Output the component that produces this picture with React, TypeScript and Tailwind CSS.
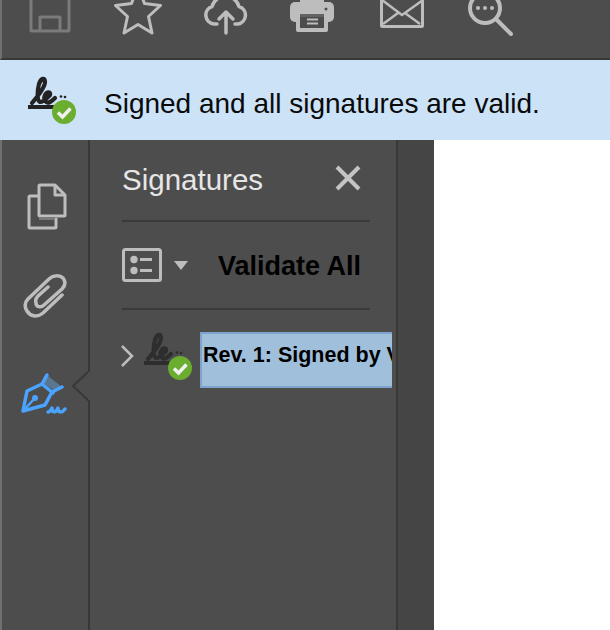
import React from 'react';

const SANS = "font-['Liberation_Sans',Arial,sans-serif]";

const Toolbar = () => (
  <div className="flex h-[60px] shrink-0 gap-10 overflow-hidden border-b-2 border-l-2 border-b-[#383838] border-l-[#707070] bg-[#4d4d4d] pl-6">
    {/* icons sit partly above the top of the window */}
    <svg width="48" height="48" viewBox="0 0 48 48" fill="none" className="-mt-3 shrink-0" stroke="#7b7b7b" strokeWidth="3" strokeLinejoin="round">
      <path d="M6 -2H36L43 5V42A1 1 0 0 1 42 43H6A1 1 0 0 1 5 42V-1Z" />
      <path d="M14 43V29H34V43M14 -2V10H34V-2M25 -2V6H30V-2" />
    </svg>
    <svg width="48" height="48" viewBox="0 0 48 48" fill="none" className="-mt-3 shrink-0" stroke="#bdbdbd" strokeWidth="3" strokeLinejoin="round">
      <path d="M24 -2L30.500 15.500L46.500 17.500L34.500 28.500L38 45L24 36.500L10 45L13.500 28.500L1.500 17.500L17.500 15.500Z" />
    </svg>
    <svg width="48" height="48" viewBox="0 0 48 48" fill="none" className="-mt-3 shrink-0" stroke="#bdbdbd" strokeWidth="3.500" strokeLinecap="round" strokeLinejoin="round">
      <path d="M15 36H12A9 9 0 0 1 10 18.500A14 14 0 0 1 37 18.500A9 9 0 0 1 36 36H33" />
      <path d="M24 45V24M17 31L24 24L31 31" />
    </svg>
    <svg width="48" height="48" viewBox="0 0 48 48" className="-mt-3 shrink-0">
      <rect x="10" y="8" width="24" height="8" fill="#bdbdbd" />
      <rect x="0" y="14" width="44" height="20" rx="5" fill="#bdbdbd" />
      <rect x="6" y="26" width="32" height="18" rx="2" fill="#bdbdbd" />
      <rect x="10" y="26" width="24" height="14" fill="#4d4d4d" />
      <rect x="10" y="26" width="24" height="3" fill="#636363" />
      <path d="M17 31.500H28M17 35.500H28" stroke="#bdbdbd" strokeWidth="2" />
      <circle cx="36" cy="21" r="1.500" fill="#4d4d4d" />
    </svg>
    <svg width="48" height="48" viewBox="0 0 48 48" fill="none" className="-mt-3 shrink-0" stroke="#bdbdbd" strokeWidth="3" strokeLinejoin="round">
      <rect x="3.500" y="-2" width="41" height="40.500" rx="1" />
      <path d="M4 12L24 27L45 12M5 36L20 25M42 36L27 25" strokeWidth="2.500" />
    </svg>
    <svg width="48" height="48" viewBox="0 0 48 48" fill="none" className="-mt-3 shrink-0" stroke="#bdbdbd" strokeWidth="4" strokeLinecap="round">
      <circle cx="19" cy="20" r="15" />
      <path d="M30 31L45 46" />
      <circle cx="12" cy="20" r="2" fill="#bdbdbd" stroke="none" />
      <circle cx="19" cy="20" r="2" fill="#bdbdbd" stroke="none" />
      <circle cx="26" cy="20" r="2" fill="#bdbdbd" stroke="none" />
    </svg>
  </div>
);

const SignatureIcon = ({ color }: { color: string }) => (
  <svg width="48" height="48" viewBox="0 0 48 48" fill="none" className="shrink-0">
    <path
      d="M4 27C10 20 17 11 17 6C17 1 13 2 11 8C9 15 9 25 12 26C16 26 20 21 22 19C23 16 19 15 17 19C15 24 18 28 22 26C24 25 26 23 27 22"
      stroke={color}
      strokeWidth="4.200"
      strokeLinecap="round"
    />
    <circle cx="33" cy="20.500" r="1.300" fill={color} />
    <circle cx="37" cy="21" r="1.300" fill={color} />
    <rect x="0" y="29" width="27" height="4" fill={color} />
    <circle cx="36" cy="36" r="12" fill="#6aad2f" />
    <path d="M30 36.500L34.500 41L42.500 32.500" stroke="#f0f0f0" strokeWidth="3.500" />
  </svg>
);

const Banner = () => (
  <div className="flex h-20 shrink-0 items-center bg-[#cce2f6] pl-7">
    <SignatureIcon color="#222222" />
    <span className={`${SANS} mt-2 ml-7 text-[28px] leading-none text-[#0a0a0a]`}>Signed and all signatures are valid.</span>
  </div>
);

const Rail = () => (
  <div className="relative flex w-[90px] shrink-0 flex-col border-r-2 border-l-2 border-r-[#383838] border-l-[#707070] pl-[19px]">
    <svg width="48" height="48" viewBox="0 0 48 48" fill="none" className="mt-[42px]" stroke="#bdbdbd" strokeWidth="3" strokeLinejoin="round">
      <path d="M17 14H9A1 1 0 0 0 8 15V45A1 1 0 0 0 9 46H34A1 1 0 0 0 35 45V36" />
      <path d="M19 3H34L44 13V33A1 1 0 0 1 43 34H19A1 1 0 0 1 18 33V4A1 1 0 0 1 19 3Z" />
      <path d="M34 3V13H44" />
      <rect x="18" y="35" width="15" height="3" fill="#7a7a7a" stroke="none" />
    </svg>
    <svg width="48" height="48" viewBox="0 0 48 48" fill="none" className="mt-[42px]" stroke="#bdbdbd" strokeWidth="3.500" strokeLinecap="round">
      <path d="M41 23L22 41C16 46 9 44 6 39C3 34 4 30 7 27L28 7C32 3 39 3 42 6C45 10 44 14 41 17L23 33C20 36 15 35 15 31C14 28 15 26 17 24L27 15" />
    </svg>
    <svg width="50" height="48" viewBox="0 0 50 48" fill="none" className="mt-[50px] -ml-px" stroke="#4aa3ff" strokeWidth="3.500" strokeLinecap="round" strokeLinejoin="round">
      <path d="M27 5L42 17L35 21L23 13Z" fill="#5a7690" stroke="none" />
      <path d="M27 5L22 14L7 21L3 41L25 35L32 22L42 17" />
      <path d="M22 14L33 23" />
      <path d="M3 41L15 28" strokeWidth="2.500" />
      <circle cx="15" cy="28" r="3" fill="#4aa3ff" stroke="none" />
      <path d="M28 42C30 42 31 40 32 38C32 43 36 43 38 38C38 43 42 43 45 39" strokeWidth="3.500" />
    </svg>
    {/* notch pointing at the active panel */}
    <svg width="18" height="34" viewBox="0 0 18 34" fill="none" className="absolute top-[231px] right-[-2px]">
      <path d="M17 0L1 15L17 30" fill="#4d4d4d" stroke="#383838" strokeWidth="2" />
      <rect x="16" y="1" width="2" height="28" fill="#4d4d4d" />
    </svg>
  </div>
);

const Panel = () => (
  <div className="flex w-[308px] shrink-0 flex-col border-r-2 border-r-[#383838] pr-[26px] pl-8">
    <div className="flex h-[82px] shrink-0 items-center justify-between border-b-2 border-b-[#3a3a3a]">
      <span className={`${SANS} text-[29.500px] leading-none text-[#e6e6e6]`}>Signatures</span>
      <svg width="26" height="26" viewBox="0 0 26 26" fill="none" className="mr-[9px] mb-1" stroke="#c4c4c4" strokeWidth="4">
        <path d="M2 2L24 24M24 2L2 24" />
      </svg>
    </div>
    <div className="flex h-[88px] shrink-0 items-center border-b-2 border-b-[#3a3a3a]">
      <svg width="40" height="34" viewBox="0 0 40 34" fill="none" className="shrink-0">
        <rect x="1.500" y="1.500" width="37" height="31" rx="2" stroke="#bdbdbd" strokeWidth="3" />
        <circle cx="12" cy="11.500" r="3.700" fill="#bdbdbd" />
        <circle cx="12" cy="22.500" r="3.700" fill="#bdbdbd" />
        <path d="M18 11.500H30M18 22.500H30" stroke="#bdbdbd" strokeWidth="3" />
      </svg>
      <svg width="14" height="9" viewBox="0 0 14 9" className="ml-3 shrink-0">
        <path d="M0 0H14L7 9Z" fill="#bdbdbd" />
      </svg>
      <span className={`${SANS} mt-[2px] ml-[30px] text-[27px] leading-none font-bold whitespace-nowrap text-black`}>Validate All</span>
    </div>
    <div className="mt-[22px] flex">
      <svg width="14" height="24" viewBox="0 0 14 24" fill="none" className="mt-3 -ml-[2px] shrink-0" stroke="#bdbdbd" strokeWidth="2.500">
        <path d="M2 2L12 12L2 22" />
      </svg>
      <div className="ml-[10px]">
        <SignatureIcon color="#2e2e2e" />
      </div>
      <div className="ml-2 h-14 w-[192px] shrink-0 overflow-hidden border-2 border-r-0 border-[#7ea3cf] bg-[#a0bfdb] pt-2 pl-[1px]">
        <span className={`${SANS} block text-[21.500px] leading-[26px] font-bold whitespace-nowrap text-black`}>Rev. 1: Signed by V</span>
      </div>
    </div>
  </div>
);

export default function App() {
  return (
    <div className="flex h-[630px] w-[610px] flex-col overflow-hidden bg-white">
      <Toolbar />
      <Banner />
      <div className="flex flex-1">
        <div className="flex w-[434px] shrink-0 bg-[#4d4d4d]">
          <Rail />
          <Panel />
          <div className="flex-1 bg-[#454545]" />
        </div>
        <div className="flex-1 bg-white" />
      </div>
    </div>
  );
}
